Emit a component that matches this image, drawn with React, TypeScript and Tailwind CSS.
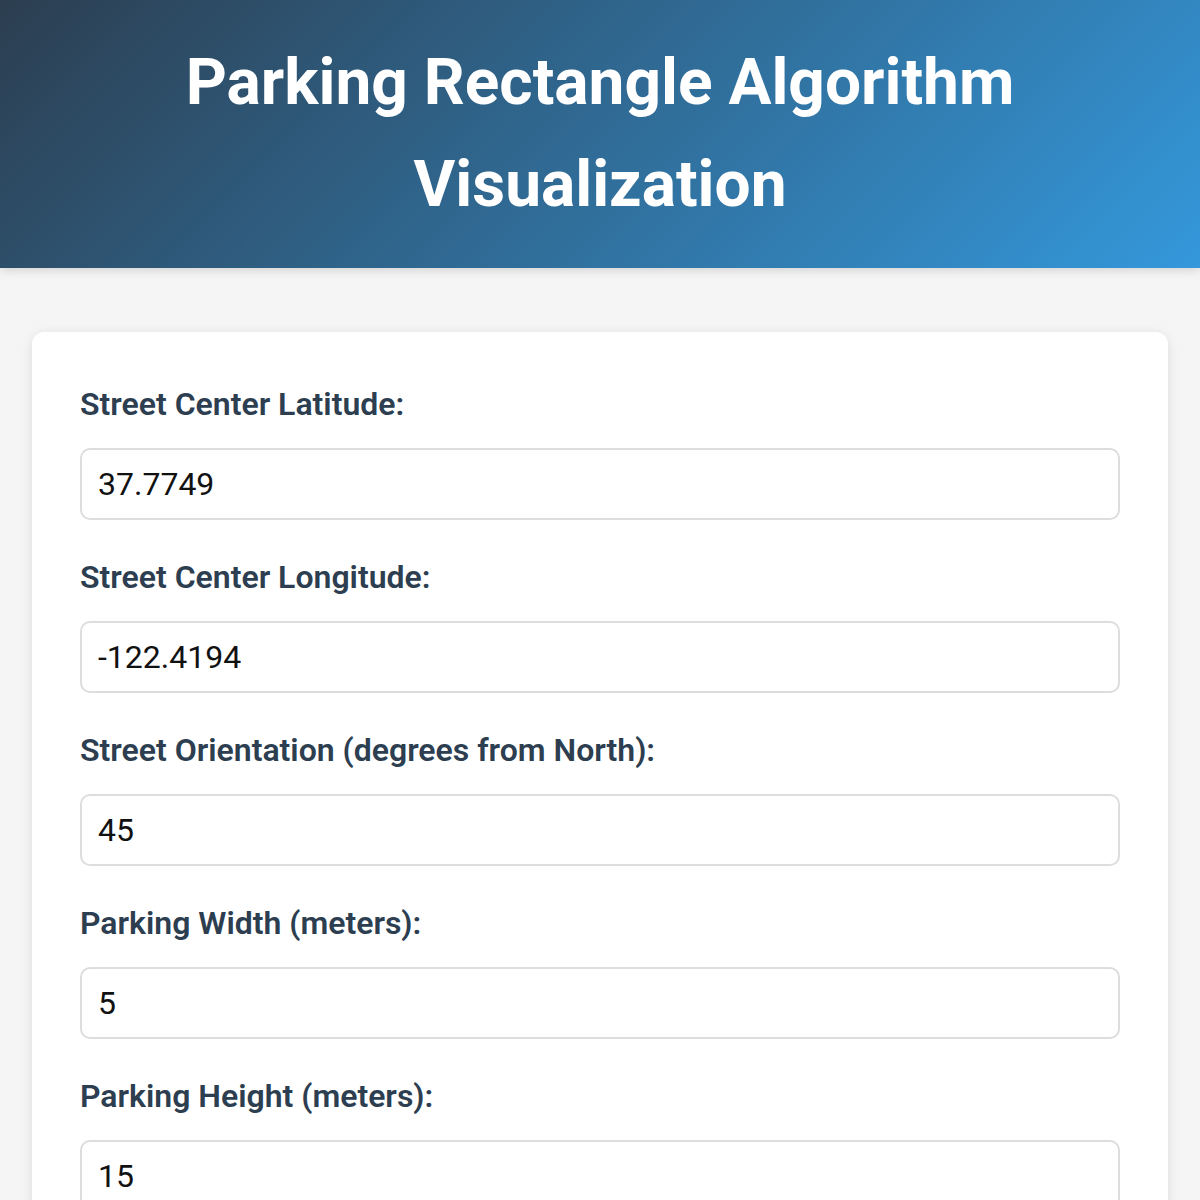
import React from 'react'

interface FieldProps {
  label: string
  value: string
}

function Field({ label, value }: FieldProps) {
  return (
    <div className="mb-[37px]">
      <label className="block mb-6 text-[32px] leading-[40px] font-semibold text-[#2c3e50]">
        {label}
      </label>
      <input
        type="text"
        defaultValue={value}
        className="block w-full h-[72px] px-4 border-2 border-[#dddddd] rounded-[10px] bg-white text-[32px] text-[#111] outline-none"
      />
    </div>
  )
}

const fields: FieldProps[] = [
  { label: 'Street Center Latitude:', value: '37.7749' },
  { label: 'Street Center Longitude:', value: '-122.4194' },
  { label: 'Street Orientation (degrees from North):', value: '45' },
  { label: 'Parking Width (meters):', value: '5' },
  { label: 'Parking Height (meters):', value: '15' },
]

export default function App() {
  return (
    <div className="min-h-screen bg-[#f5f5f5] font-['Roboto',sans-serif]">
      {/* Header */}
      <header className="bg-[linear-gradient(135deg,#2c3e50,#3498db)] py-8 shadow-[0_2px_10px_rgba(0,0,0,0.15)]">
        <h1 className="text-center text-white text-[64px] leading-[102px] font-bold px-8">
          Parking Rectangle Algorithm Visualization
        </h1>
      </header>

      {/* Form card */}
      <main className="px-8 pt-16 pb-8">
        <div className="bg-white rounded-[12px] shadow-[0_2px_12px_rgba(0,0,0,0.1)] px-12 pt-[52px] pb-12">
          {fields.map((f) => (
            <Field key={f.label} label={f.label} value={f.value} />
          ))}
        </div>
      </main>
    </div>
  )
}
